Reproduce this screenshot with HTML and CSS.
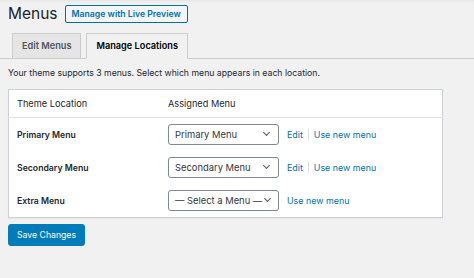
FILE: index.html
```html
<!DOCTYPE html>
<html>
<head>
	<title>Menus</title>
	<link rel="stylesheet" href="styles.css">
</head>

<body>
	<div class="wrap">
		<div class="page-head">
			<h1>Menus</h1>
			<a class="live-preview" href="#">Manage with Live Preview</a>
		</div>

		<nav class="tabs">
			<a class="tab" href="#">Edit Menus</a>
			<a class="tab tab-active" href="#">Manage Locations</a>
		</nav>

		<p class="intro">Your theme supports 3 menus. Select which menu appears in each location.</p>

		<table class="locations">
			<thead>
				<tr>
					<th class="col-location">Theme Location</th>
					<th>Assigned Menu</th>
				</tr>
			</thead>
			<tbody>
				<tr>
					<td class="col-location">Primary Menu</td>
					<td>
						<div class="assign">
							<div class="select"><span>Primary Menu</span><span class="chevron"></span></div>
							<a href="#" class="edit-link">Edit</a>
							<a href="#">Use new menu</a>
						</div>
					</td>
				</tr>
				<tr>
					<td class="col-location">Secondary Menu</td>
					<td>
						<div class="assign">
							<div class="select"><span>Secondary Menu</span><span class="chevron"></span></div>
							<a href="#" class="edit-link">Edit</a>
							<a href="#">Use new menu</a>
						</div>
					</td>
				</tr>
				<tr>
					<td class="col-location">Extra Menu</td>
					<td>
						<div class="assign">
							<div class="select"><span>&mdash; Select a Menu &mdash;</span><span class="chevron"></span></div>
							<a href="#">Use new menu</a>
						</div>
					</td>
				</tr>
			</tbody>
		</table>

		<button class="save">Save Changes</button>
	</div>
</body>
</html>
```

FILE: styles.css
```css
html, body {
	height: 100%;
}

body {
	margin: 0;
	background: #f1f1f1;
	color: #23282d;
	font-family: Inter, "Liberation Sans", sans-serif;
	font-size: 8.7px;
	box-shadow: inset 0 3px 3px -2px rgba(0, 0, 0, 0.06);
}

a {
	color: #0073aa;
	text-decoration: none;
}

.wrap {
	padding: 4px 31px 0 8px;
}

.page-head {
	display: flex;
	align-items: center;
	gap: 7px;
	height: 20px;
}

h1 {
	margin: 0;
	font-size: 15.5px;
	font-weight: 400;
	line-height: 20px;
	color: #1d2327;
}

.live-preview {
	box-sizing: border-box;
	border: 1px solid #0071a1;
	border-radius: 2px;
	background: #f3f5f6;
	padding: 0 6px;
	height: 18px;
	line-height: 16px;
	font-size: 8.7px;
	font-weight: 600;
}

.tabs {
	display: flex;
	gap: 5px;
	margin: 9px -31px 0 -8px;
	padding-left: 12px;
	border-bottom: 1px solid #ccc;
}

.tab {
	display: block;
	margin-bottom: -1px;
	padding: 0 9px;
	height: 24px;
	line-height: 24px;
	border: 1px solid #ccc;
	background: #e5e5e5;
	color: #50575e;
	font-size: 9.2px;
	font-weight: 600;
}

.tab-active {
	background: #f1f1f1;
	border-bottom-color: #f1f1f1;
	color: #000;
}

.intro {
	margin: 8px 0 10px;
	line-height: 12px;
}

.locations {
	width: 100%;
	border-collapse: collapse;
	background: #fff;
	border: 1px solid #ccd0d4;
	box-shadow: 0 1px 1px rgba(0, 0, 0, 0.04);
}

.locations th {
	height: 27px;
	padding: 0 8px;
	text-align: left;
	font-weight: 400;
	font-size: 9.2px;
	border-bottom: 1px solid #e1e1e1;
}

.locations td {
	height: 33px;
	padding: 0 8px;
	font-weight: 600;
	font-size: 8.7px;
}

.col-location {
	width: 135px;
}

.assign {
	display: flex;
	align-items: center;
	font-weight: 400;
	font-size: 8.9px;
}

.select {
	display: flex;
	align-items: center;
	justify-content: space-between;
	box-sizing: border-box;
	width: 111px;
	height: 21px;
	padding: 0 9px 0 6px;
	margin-right: 8px;
	border: 1px solid #7e8993;
	border-radius: 3px;
	color: #32373c;
	font-size: 9.4px;
	white-space: nowrap;
}

.chevron {
	flex: none;
	width: 4px;
	height: 4px;
	margin-left: 3px;
	border-right: 1px solid #555;
	border-bottom: 1px solid #555;
	transform: translateY(-2px) rotate(45deg);
}

.edit-link {
	padding-right: 5px;
	margin-right: 5px;
	border-right: 1px solid #ddd;
}

.save {
	margin-top: 6px;
	height: 22px;
	padding: 0 8px;
	border: 1px solid #007cba;
	border-radius: 3px;
	background: #007cba;
	color: #fff;
	font-family: Inter, "Liberation Sans", sans-serif;
	font-size: 8.7px;
}
```
